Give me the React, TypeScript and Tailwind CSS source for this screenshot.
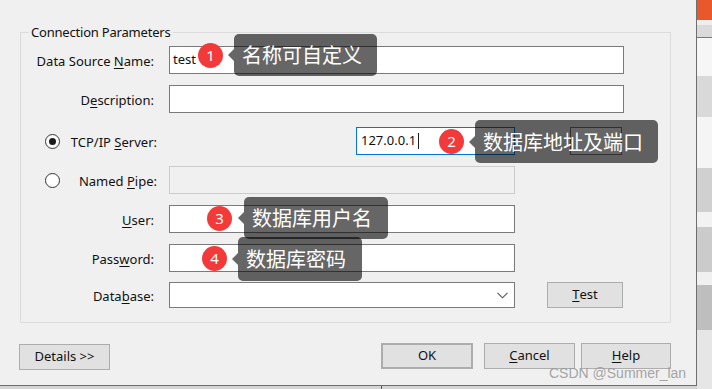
import React from 'react';

const ui = "font-['Noto_Sans','Liberation_Sans',sans-serif] text-[13px] text-[#111]";
const cjk = "font-['Noto_Sans_CJK_SC','Noto_Sans',sans-serif]";

function Key({ children }: { children: React.ReactNode }) {
  return <span className="underline underline-offset-[2px]">{children}</span>;
}

function Box({ className = '', children }: { className?: string; children?: React.ReactNode }) {
  return (
    <div className={`h-full bg-white border border-[#7a7a7a] flex items-center pl-[3px] ${className}`}>
      {children}
    </div>
  );
}

function Btn({ className = '', children }: { className?: string; children: React.ReactNode }) {
  return (
    <div className={`h-[26px] bg-[#e1e1e1] border border-[#adadad] flex items-center justify-center ${className}`}>
      {children}
    </div>
  );
}

function Radio({ on }: { on?: boolean }) {
  return (
    <div className="w-[15px] h-[15px] rounded-full border border-[#333] bg-white flex items-center justify-center">
      {on && <div className="w-[7px] h-[7px] rounded-full bg-[#1b1b1b]" />}
    </div>
  );
}

// numbered callout: red dot + dark bubble with left caret
function Callout({ n, text, dot, box }: { n: number; text: string; dot: string; box: string }) {
  return (
    <>
      <div className={`absolute w-[25px] h-[25px] rounded-full bg-[#f23a3a] text-white flex items-center justify-center text-[15px] font-['Noto_Sans',sans-serif] ${dot}`}>
        {n}
      </div>
      <div className={`absolute rounded-[5px] bg-black/60 text-white text-[20px] flex items-center pl-[8px] ${cjk} ${box}`}>
        <div className="absolute right-full top-1/2 -translate-y-1/2 w-0 h-0 border-y-[6px] border-y-transparent border-r-[6px] border-r-black/60" />
        {text}
      </div>
    </>
  );
}

const bands: [number, string][] = [
  [20, '#e9582b'],
  [5, '#eeeeee'],
  [12, '#dadada'],
  [1, '#7a7a7a'],
  [38, '#f6f6f6'],
  [41, '#d9d9d9'],
  [51, '#f5f5f5'],
  [44, '#d0d0d0'],
  [15, '#f2f2f2'],
  [45, '#cbcbcb'],
  [13, '#f0f0f0'],
  [45, '#bebebe'],
  [59, '#e6e6e6'],
];

export default function App() {
  return (
    <div className={`relative w-[712px] h-[389px] flex overflow-hidden bg-[#e6e6e6] ${ui}`}>
      <div className="w-[697px] flex flex-col">
        {/* dialog */}
        <div className="h-[386px] bg-[#f0f0f0] border-r border-b border-[#6e6e6e] flex flex-col">
          <div className="relative ml-[20px] mt-[32px] w-[651px] h-[291px] border border-[#dcdcdc] pt-[13px]">
            <span className="absolute left-[8px] top-[-10px] px-[2px] bg-[#f0f0f0] leading-[18px] tracking-[-0.2px]">Connection Parameters</span>

            <div className="flex items-center h-[28px]">
              <div className="w-[133px] text-right pt-[4px]">Data Source <Key>N</Key>ame:</div>
              <Box className="ml-[15px] w-[455px]">test</Box>
            </div>

            <div className="flex items-center h-[28px] mt-[11px]">
              <div className="w-[133px] text-right pt-[4px]">D<Key>e</Key>scription:</div>
              <Box className="ml-[15px] w-[455px]" />
            </div>

            <div className="flex items-center h-[28px] mt-[14px]">
              <div className="w-[136px] flex items-center pl-[24px]">
                <Radio on />
                <span className="flex-1 text-right pt-[4px]">TCP/IP <Key>S</Key>erver:</span>
              </div>
              <div className="ml-[199px] w-[159px] h-full bg-white border border-[#0078d7] flex items-center pl-[4px]">
                127.0.0.1<span className="ml-[2px] w-px h-[16px] bg-[#1b1b1b]" />
              </div>
              <Box className="ml-[55px] w-[52px]" />
            </div>

            <div className="flex items-center h-[28px] mt-[11px]">
              <div className="w-[136px] flex items-center pl-[24px]">
                <Radio />
                <span className="flex-1 text-right pt-[4px]">Named <Key>P</Key>ipe:</span>
              </div>
              <div className="ml-[12px] w-[346px] h-full bg-[#f0f0f0] border border-[#cccccc]" />
            </div>

            <div className="flex items-center h-[28px] mt-[11px]">
              <div className="w-[133px] text-right pt-[4px]"><Key>U</Key>ser:</div>
              <Box className="ml-[15px] w-[346px]" />
            </div>

            <div className="flex items-center h-[28px] mt-[11px]">
              <div className="w-[133px] text-right pt-[4px]">Pass<Key>w</Key>ord:</div>
              <Box className="ml-[15px] w-[346px]" />
            </div>

            <div className="flex items-center h-[26px] mt-[10px]">
              <div className="w-[133px] text-right pt-[4px]">Data<Key>b</Key>ase:</div>
              <Box className="ml-[15px] w-[346px] justify-end pr-[6px]">
                <svg width="11" height="7" viewBox="0 0 11 7" fill="none" stroke="#555" strokeWidth="1.1">
                  <path d="M0.5 0.8 L5.5 5.8 L10.5 0.8" />
                </svg>
              </Box>
              <Btn className="ml-[32px] w-[76px] -mt-[1px]"><Key>T</Key>est</Btn>
            </div>
          </div>

          <div className="flex mt-[20px]">
            <Btn className="ml-[19px] w-[91px] mt-[1px]">Details &gt;&gt;</Btn>
            <div className="flex-1" />
            <Btn className="w-[92px] border-2 border-[#0078d7]">OK</Btn>
            <Btn className="ml-[11px] w-[91px]"><Key>C</Key>ancel</Btn>
            <Btn className="ml-[6px] w-[90px] mr-[25px]"><Key>H</Key>elp</Btn>
          </div>
        </div>
        <div className="flex-1 bg-[#d4d4d4] flex">
          <div className="w-[381px]" />
          <div className="w-px bg-[#555]" />
        </div>
      </div>

      {/* right background strip */}
      <div className="w-[15px] flex flex-col">
        {bands.map(([h, c], i) => (
          <div key={i} style={{ height: h, background: c }} />
        ))}
      </div>

      <Callout n={1} text="名称可自定义" dot="left-[198px] top-[43px]" box="left-[234px] top-[34px] w-[143px] h-[42px]" />
      <Callout n={2} text="数据库地址及端口" dot="left-[439px] top-[129px]" box="left-[475px] top-[120px] w-[183px] h-[43px]" />
      <Callout n={3} text="数据库用户名" dot="left-[207px] top-[206px]" box="left-[244px] top-[197px] w-[144px] h-[42px]" />
      <Callout n={4} text="数据库密码" dot="left-[202px] top-[246px]" box="left-[238px] top-[237px] w-[124px] h-[44px]" />

      <div className="absolute left-[549px] top-[364px] text-[14px] text-[#9a9a9a]/90 font-['Liberation_Sans',sans-serif] leading-[18px]">
        CSDN @Summer_lan
      </div>
    </div>
  );
}
